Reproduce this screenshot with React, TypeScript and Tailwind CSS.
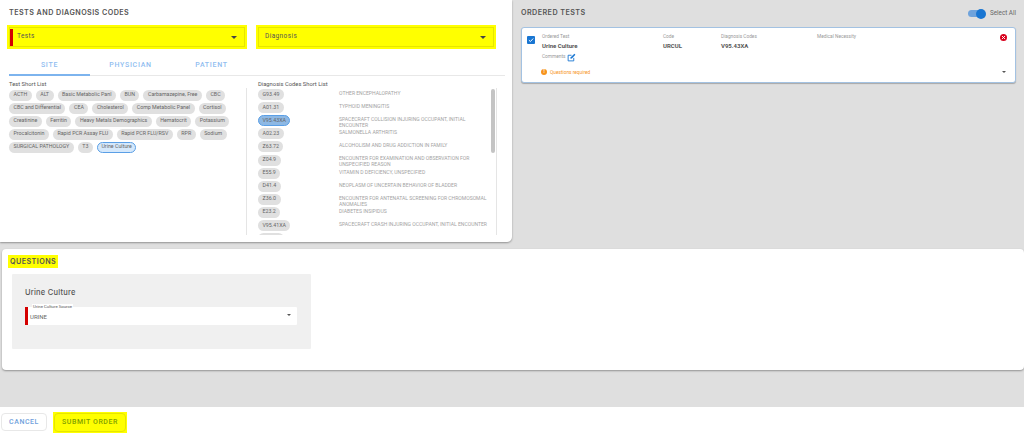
import type { ReactNode } from 'react'

const testChips = [
  ['ACTH', 'ALT', 'Basic Metabolic Panl', 'BUN', 'Carbamazepine, Free', 'CBC'],
  ['CBC and Differential', 'CEA', 'Cholesterol', 'Comp Metabolic Panel', 'Cortisol'],
  ['Creatinine', 'Ferritin', 'Heavy Metals Demographics', 'Hematocrit', 'Potassium'],
  ['Procalcitonin', 'Rapid PCR Assay FLU', 'Rapid PCR FLU/RSV', 'RPR', 'Sodium'],
  ['SURGICAL PATHOLOGY', 'T3', 'Urine Culture'],
]

const diagnosisCodes = [
  { code: 'G93.49', text: 'OTHER ENCEPHALOPATHY' },
  { code: 'A01.31', text: 'TYPHOID MENINGITIS' },
  { code: 'V95.43XA', text: 'SPACECRAFT COLLISION INJURING OCCUPANT, INITIAL ENCOUNTER', active: true },
  { code: 'A02.23', text: 'SALMONELLA ARTHRITIS' },
  { code: 'Z63.72', text: 'ALCOHOLISM AND DRUG ADDICTION IN FAMILY' },
  { code: 'Z04.9', text: 'ENCOUNTER FOR EXAMINATION AND OBSERVATION FOR UNSPECIFIED REASON' },
  { code: 'E55.9', text: 'VITAMIN D DEFICIENCY, UNSPECIFIED' },
  { code: 'D41.4', text: 'NEOPLASM OF UNCERTAIN BEHAVIOR OF BLADDER' },
  { code: 'Z36.0', text: 'ENCOUNTER FOR ANTENATAL SCREENING FOR CHROMOSOMAL ANOMALIES' },
  { code: 'E23.2', text: 'DIABETES INSIPIDUS' },
  { code: 'V95.41XA', text: 'SPACECRAFT CRASH INJURING OCCUPANT, INITIAL ENCOUNTER' },
]

const heading = "font-['Inter',sans-serif] font-semibold text-[7.2px] tracking-[0.06em] text-[#555]"

function Caret({ small }: { small?: boolean }) {
  return small
    ? <span className="w-0 h-0 border-x-[2px] border-x-transparent border-t-[2px] border-t-[#555]" />
    : <span className="w-0 h-0 border-x-[3px] border-x-transparent border-t-[3px] border-t-[#444]" />
}

function YellowSelect({ label, required }: { label: string; required?: boolean }) {
  return (
    <div className="flex-1 h-[24px] bg-[#ffff00] p-[2px]">
      <div className="h-full flex items-center border border-[#e6e600] pr-[7px]">
        {required && <span className="w-[3px] h-[17px] bg-[#d40000]" />}
        <span className={`text-[6.5px] tracking-[0.06em] text-[#555] ${required ? 'ml-[4px]' : 'ml-[6px]'}`}>{label}</span>
        <span className="ml-auto flex"><Caret /></span>
      </div>
    </div>
  )
}

function Chip({ label }: { label: string }) {
  const selected = label === 'Urine Culture'
  return (
    <span
      className={`h-[11px] rounded-full flex items-center whitespace-nowrap text-[5.3px] text-[#666] ${
        selected ? 'px-[3.5px] bg-[#d5e8fb] border border-[#5a9fe6]' : 'px-[4.5px] bg-[#e0e0e0]'
      }`}
    >
      {label}
    </span>
  )
}

function Field({ label, children }: { label: string; children?: ReactNode }) {
  return (
    <>
      <div className="text-[4.8px] text-[#999] leading-[6px]">{label}</div>
      {children && <div className="text-[6px] font-bold text-[#555] leading-[7px] mt-[2px]">{children}</div>}
    </>
  )
}

export default function App() {
  return (
    <div className="w-[1024px] h-[433px] overflow-hidden flex flex-col bg-[#dfdfdf] font-['Roboto',sans-serif]">
      <div className="flex h-[242px]">
        {/* Tests and diagnosis */}
        <section className="w-[512px] bg-white rounded-br-[5px] shadow-[0_1px_2px_rgba(0,0,0,0.35)] flex flex-col">
          <h2 className={`${heading} pl-[9px] pt-[8px] leading-[9px]`}>TESTS AND DIAGNOSIS CODES</h2>
          <div className="flex gap-[9px] pl-[7px] pr-[16px] mt-[8px]">
            <YellowSelect label="Tests" required />
            <YellowSelect label="Diagnosis" />
          </div>
          <div className="flex mt-[7px] ml-[9px] mr-[7px] h-[20px] border-b border-[#e8e8e8]">
            <div className="w-[81px] -mb-px flex items-center justify-center border-b-[2px] border-[#7db4ee] text-[7px] font-medium tracking-[0.1em] text-[#8fbdf0]">SITE</div>
            <div className="w-[81px] flex items-center justify-center text-[7px] font-medium tracking-[0.1em] text-[#8fbdf0]">PHYSICIAN</div>
            <div className="w-[81px] flex items-center justify-center text-[7px] font-medium tracking-[0.1em] text-[#8fbdf0]">PATIENT</div>
          </div>
          <div className="flex pt-[4px] pl-[9px]">
            <div className="w-[238px]">
              <div className="text-[5.8px] text-[#555] leading-[8px]">Test Short List</div>
              <div className="h-[147px] border-r border-[#e5e5e5] flex flex-col gap-[2px] pt-[1.5px]">
                {testChips.map((row, i) => (
                  <div key={i} className="flex gap-[4px]">
                    {row.map((c) => <Chip key={c} label={c} />)}
                  </div>
                ))}
              </div>
            </div>
            <div className="w-[250px]">
              <div className="pl-[11px] text-[5.8px] text-[#555] leading-[8px]">Diagnosis Codes Short List</div>
              <div className="relative h-[147px] pl-[11px] border-r border-[#e5e5e5] overflow-hidden">
                {diagnosisCodes.map((d) => (
                  <div key={d.code} className="flex h-[13.1px]">
                    <div className="w-[81px] flex items-center">
                      <span className={`flex h-[11px] rounded-full items-center text-[5.3px] text-[#666] ${d.active ? 'px-[3.5px] bg-[#8db8e4] border border-[#5a9fe6]' : 'px-[4.5px] bg-[#e0e0e0]'}`}>
                        {d.code}
                      </span>
                    </div>
                    <div className="w-[150px] pt-[2px] text-[5.05px] leading-[6px] text-[#a3a3a3]">{d.text}</div>
                  </div>
                ))}
                <div className="w-[26px] h-[11px] mt-[1px] rounded-full bg-[#e0e0e0]" />
                <span className="absolute right-[1px] top-[1px] w-[4px] h-[64px] rounded-full bg-[#c4c4c4]" />
              </div>
            </div>
          </div>
        </section>

        {/* Ordered tests */}
        <section className="flex-1 pl-[9px] pr-[8px]">
          <div className="flex items-center h-[27px] pb-[2px] pt-[2px]">
            <h2 className={heading}>ORDERED TESTS</h2>
            <div className="ml-auto flex items-center">
              <span className="relative w-[14px] h-[7px] rounded-full bg-[#6fa3dc]">
                <span className="absolute -right-[4px] -top-[1.5px] w-[10px] h-[10px] rounded-full bg-[#1976d2]" />
              </span>
              <span className="ml-[8px] text-[6.3px] text-[#666]">Select All</span>
            </div>
          </div>
          <div className="h-[56px] bg-white rounded-[3px] border-[1.5px] border-[#a3c2e2] shadow-[0_1px_1px_rgba(0,0,0,0.25)] flex relative pt-[5.5px]">
            <span className="ml-[5px] mt-[2px] w-[8px] h-[8px] rounded-[1px] bg-[#1976d2] flex items-center justify-center">
              <svg viewBox="0 0 10 10" className="w-[6px] h-[6px]" fill="none" stroke="white" strokeWidth="1.6"><path d="M1.5 5.2 4 7.6 8.6 2.6" /></svg>
            </span>
            <div className="ml-[7px] w-[121px]">
              <Field label="Ordered Test">Urine Culture</Field>
              <div className="flex items-center mt-[4px] h-[9px]">
                <span className="text-[4.8px] text-[#999]">Comments</span>
                <svg viewBox="0 0 12 12" className="w-[9px] h-[9px] ml-[1px]" fill="none" stroke="#1976d2" strokeWidth="1.2">
                  <path d="M9 6.5V10.5H1.5V3H6" />
                  <path d="M4.5 7.8 5 5.6 9.8 1 11.2 2.4 6.6 7.2Z" fill="#1976d2" stroke="none" />
                </svg>
              </div>
              <div className="flex items-center mt-[7px] -ml-[1px]">
                <span className="w-[6px] h-[6px] rounded-full bg-[#f7941d] text-white text-[4.5px] leading-[6px] text-center font-bold">!</span>
                <span className="ml-[3px] text-[4.8px] text-[#f7941d]">Questions required</span>
              </div>
            </div>
            <div className="w-[58px]"><Field label="Code">URCUL</Field></div>
            <div className="w-[96px]"><Field label="Diagnosis Codes">V95.43XA</Field></div>
            <Field label="Medical Necessity" />
            <span className="absolute right-[8px] top-[6px] w-[7px] h-[7px] rounded-full bg-[#d8001c] flex items-center justify-center">
              <svg viewBox="0 0 8 8" className="w-[5px] h-[5px]" stroke="white" strokeWidth="1.5"><path d="M1.5 1.5 6.5 6.5M6.5 1.5 1.5 6.5" /></svg>
            </span>
            <span className="absolute right-[9px] bottom-[9px] flex"><Caret small /></span>
          </div>
        </section>
      </div>

      {/* Questions */}
      <section className="mt-[7px] ml-[2px] h-[121px] bg-white rounded-[4px] shadow-[0_1px_2px_rgba(0,0,0,0.35)] pt-[6px] pl-[6px]">
        <h2 className={`${heading} w-fit bg-[#ffff00] h-[13px] leading-[13px] px-[2px]`}>QUESTIONS</h2>
        <div className="mt-[6px] ml-[4px] w-[299px] h-[75px] bg-[#f0f0f0] rounded-[1px] pt-[14px] pl-[13px]">
          <div className="font-['Inter',sans-serif] font-medium text-[7.5px] leading-[10px] tracking-[0.03em] text-[#555]">Urine Culture</div>
          <div className="relative mt-[9px] w-[272px] h-[18px] bg-white rounded-[1px] flex items-center pr-[6px]">
            <span className="w-[3px] h-full bg-[#d40000]" />
            <span className="absolute left-[7px] -top-[3.5px] px-[1px] bg-white leading-[5px] text-[4.3px] text-[#555]">Urine Culture Source</span>
            <span className="ml-[2px] text-[6px] text-[#666]">URINE</span>
            <span className="ml-auto flex -mt-[2px]"><Caret small /></span>
          </div>
        </div>
      </section>

      {/* Footer */}
      <footer className="mt-auto h-[26px] bg-white flex items-start pt-[5px] pl-[1px] gap-[6px]">
        <button className="w-[46px] h-[18px] mt-[1px] border border-[#e8e8e8] rounded-[4px] text-[7px] font-medium tracking-[0.08em] text-[#6f9fdc]">CANCEL</button>
        <div className="flex w-[74px] h-[21px] bg-[#ffff00] p-[1px]">
          <button className="w-full h-full border border-[#e6e600] rounded-[4px] text-[7px] font-medium tracking-[0.08em] text-[#7f9f00]">SUBMIT ORDER</button>
        </div>
      </footer>
    </div>
  )
}
